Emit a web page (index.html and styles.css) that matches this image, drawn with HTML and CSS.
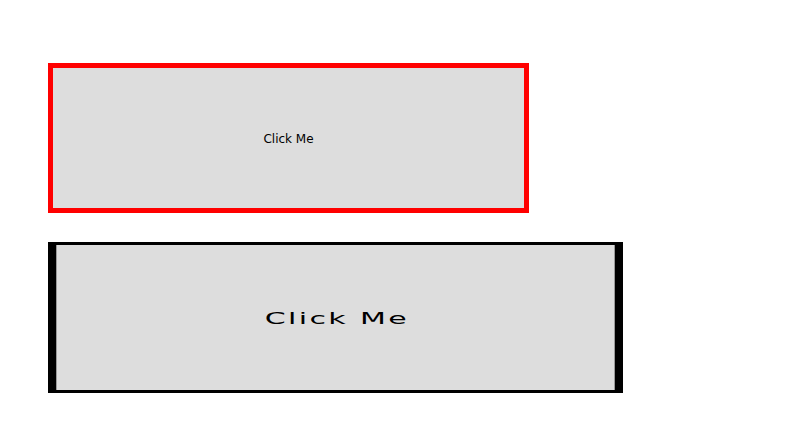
FILE: index.html
```html
<!DOCTYPE html>
<html>
<head>
<meta charset="utf-8">
<link rel="stylesheet" href="styles.css">
</head>
<body>
<div class="stack">
  <button class="btn btn-red"><span class="label">Click Me</span></button>
  <button class="btn btn-wide"><span class="wide-label">Click Me</span></button>
</div>
</body>
</html>
```
FILE: styles.css
```css
html, body {
  margin: 0;
  padding: 0;
  background: #fff;
}
.stack {
  display: flex;
  flex-direction: column;
  align-items: flex-start;
  gap: 29px;
  padding: 63px 0 0 48px;
}
.btn {
  box-sizing: border-box;
  background: #dddddd;
  color: #000;
  font-family: "DejaVu Sans", sans-serif;
  padding: 0;
  margin: 0;
  display: flex;
  align-items: center;
  justify-content: center;
}
.btn-red {
  width: 481px;
  height: 150px;
  border: 5px solid #ff0000;
  font-size: 12px;
}
.label {
  padding-top: 2px;
}
.btn-wide {
  width: 575px;
  height: 151px;
  border-style: solid;
  border-color: #000;
  border-width: 3px 8px;
  box-shadow: inset 1px 0 0 #9a9a9a, inset -1px 0 0 #9a9a9a;
  font-size: 15px;
}
.wide-label {
  display: inline-block;
  letter-spacing: 1.2px;
  transform: scaleX(2);
  padding-left: 1.2px;
  padding-top: 2px;
}
```
